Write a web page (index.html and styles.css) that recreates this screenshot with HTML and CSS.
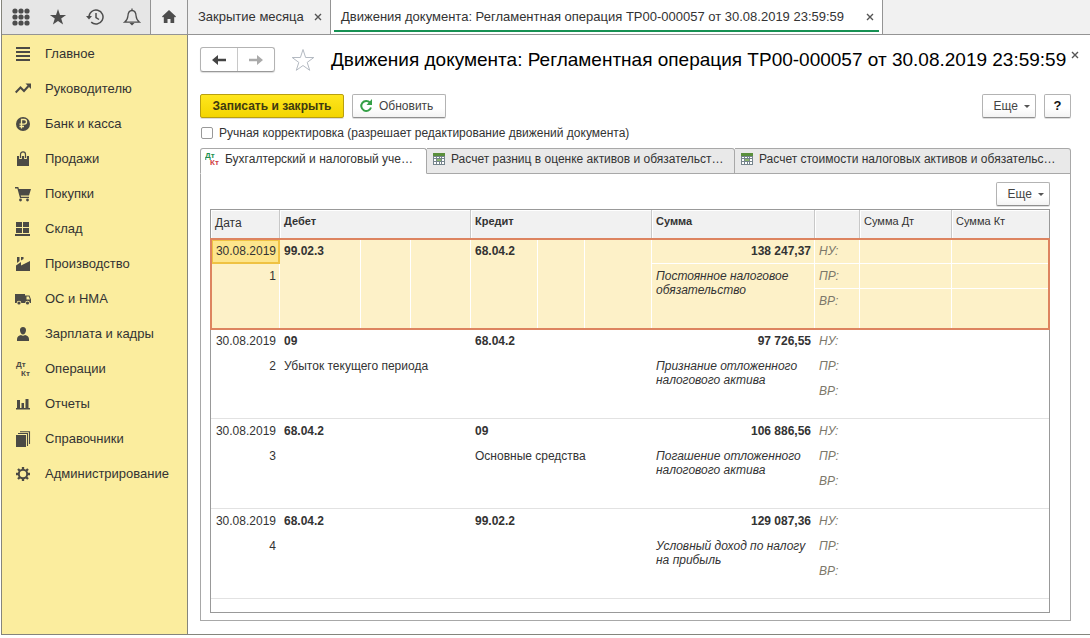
FILE: index.html
```
<!DOCTYPE html>
<html lang="ru">
<head>
    <meta charset="UTF-8">
    <meta name="viewport" content="width=device-width, initial-scale=1.0">
    <title>Движения документа</title>
    <link rel="stylesheet" href="styles.css">
</head>
<body>
    <div class="app">
        <header class="topbar">
            <div class="tools">
                <button class="tool" aria-label="Меню">
                    <svg width="18" height="18" viewBox="0 0 18 18" fill="currentColor"><circle cx="3" cy="3" r="2.6"/><circle cx="9" cy="3" r="2.6"/><circle cx="15" cy="3" r="2.6"/><circle cx="3" cy="9" r="2.6"/><circle cx="9" cy="9" r="2.6"/><circle cx="15" cy="9" r="2.6"/><circle cx="3" cy="15" r="2.6"/><circle cx="9" cy="15" r="2.6"/><circle cx="15" cy="15" r="2.6"/></svg>
                </button>
                <button class="tool" aria-label="Избранное">
                    <svg width="18" height="18" viewBox="0 0 18 18" fill="currentColor"><path d="M9 1l2 5.900h6.100l-4.900 3.700 1.900 6L9 13l-5.100 3.600 1.900-6L.9 6.900H7z"/></svg>
                </button>
                <button class="tool" aria-label="История">
                    <svg width="18" height="18" viewBox="0 0 18 18" fill="none" stroke="currentColor" stroke-width="1.5"><path d="M3 9a7 7 0 1 1 2.200 5.100M10 5v4.500l3 2"/><path d="M0 8h6L3 11.500z" fill="currentColor" stroke="none"/></svg>
                </button>
                <button class="tool" aria-label="Оповещения">
                    <svg width="18" height="18" viewBox="0 0 18 18" fill="none" stroke="currentColor" stroke-width="1.300"><path d="M9 .5v2M1.500 14.200h15c-2.400-1.700-3.200-3.300-3.400-6.200C12.900 4.500 11.500 2.500 9 2.500S5.100 4.500 4.900 8c-.2 2.900-1 4.500-3.400 6.200z"/><path d="M6.500 15h5L9 17.500z" fill="currentColor" stroke="none"/></svg>
                </button>
            </div>
            <button class="home" aria-label="Начальная страница">
                <svg width="14" height="14" viewBox="0 0 14 14" fill="currentColor"><path d="M7 0l7 6.500-1 1-.8-.7V13H8.500V9h-3v4H1.800V6.800l-.8.7-1-1z"/></svg>
            </button>
            <div class="page-tab">
                <a href="#">Закрытие месяца</a>
                <button class="close" aria-label="Закрыть"><svg width="8" height="8" viewBox="0 0 8 8"><path d="M1 1l6 6M7 1L1 7"/></svg></button>
            </div>
            <div class="page-tab active">
                <a href="#">Движения документа: Регламентная операция ТР00-000057 от 30.08.2019 23:59:59</a>
                <button class="close" aria-label="Закрыть"><svg width="8" height="8" viewBox="0 0 8 8"><path d="M1 1l6 6M7 1L1 7"/></svg></button>
            </div>
        </header>

        <div class="workspace">
            <nav class="sidebar">
                <a href="#"><svg viewBox="0 0 16 16"><path d="M1 1h14v2H1zM1 5h14v2H1zM1 9h14v2H1zM1 13h14v2H1z"/></svg>Главное</a>
                <a href="#"><svg viewBox="0 0 16 16"><path d="M.7 11.500l4.800-5L9 10l4.500-5" fill="none" stroke="currentColor" stroke-width="2"/><path d="M10.500 2.500H16V8z"/></svg>Руководителю</a>
                <a href="#"><svg viewBox="0 0 16 16"><circle cx="8" cy="8" r="7"/><path d="M6.500 12.500v-9h2.700a2.300 2.300 0 0 1 0 4.700H4.500M4.500 10.500h4.500" fill="none" stroke="#fbed9e" stroke-width="1.300"/></svg>Банк и касса</a>
                <a href="#"><svg viewBox="0 0 16 16"><path d="M2 5h12v10H2z"/><path d="M5.500 8V3.500C5.500 1 10.500 1 10.500 3.500V8" fill="none" stroke="#fbed9e" stroke-width="2.800"/><path d="M5.500 7V3.500C5.500 0 10.500 0 10.500 3.500V7" fill="none" stroke="currentColor" stroke-width="1.200"/></svg>Продажи</a>
                <a href="#"><svg viewBox="0 0 16 16"><path d="M0 1h3.300l.6 2H16l-2 6.500H5.700l.4 1.300H14V12H5L2.400 2.500H0z"/><circle cx="5.500" cy="14" r="1.400"/><circle cx="12.500" cy="14" r="1.400"/></svg>Покупки</a>
                <a href="#"><svg viewBox="0 0 16 16"><path d="M1 1h6v5H1zM8 1h6v5H8zM1 7h6v5H1zM8 7h6v5H8zM0 13h15v2H0z"/></svg>Склад</a>
                <a href="#"><svg viewBox="0 0 16 16"><path d="M1 15V9.500L6 6v3.500L15 5v10zM2 1h2.500v4L2 7zM6 1h2.500v2L6 4.500z"/></svg>Производство</a>
                <a href="#"><svg viewBox="0 0 16 16"><path d="M0 3h10v9H0zM10 4.500h4.500l1.500 4V12h-6z"/><path d="M11.500 5.500h2.300l1.200 3h-3.500z" fill="#fbed9e"/><circle cx="4" cy="12" r="2.300" fill="#fbed9e"/><circle cx="12.500" cy="12" r="2.300" fill="#fbed9e"/><circle cx="4" cy="12" r="1.600"/><circle cx="12.500" cy="12" r="1.600"/></svg>ОС и НМА</a>
                <a href="#"><svg viewBox="0 0 16 16"><path d="M8 1c2 0 3.200 1.400 3 3.500C10.800 6.800 9.700 8.500 8 8.500S5.200 6.800 5 4.500C4.800 2.400 6 1 8 1zM2 15v-2c0-2.500 2-3.500 4-4 1 1 3 1 4 0 2 .5 4 1.500 4 4v2z"/></svg>Зарплата и кадры</a>
                <a href="#"><svg viewBox="0 0 16 16"><text x="1" y="6">Дт</text><text x="6" y="15">Кт</text></svg>Операции</a>
                <a href="#"><svg viewBox="0 0 16 16"><path d="M2 4h3v8H2zM6.500 7h2.500v5H6.500zM10.500 3h3v9h-3zM1 12h14v1.500H1z"/></svg>Отчеты</a>
                <a href="#"><svg viewBox="0 0 16 16"><path d="M1 4h10v12H1z"/><path d="M3 2.500h9.500V15M5 .7h9.500V13" fill="none" stroke="currentColor" stroke-width="1.100"/></svg>Справочники</a>
                <a href="#"><svg viewBox="0 0 16 16"><g fill="none" stroke="currentColor"><circle cx="8" cy="8" r="4.200" stroke-width="2"/><path d="M8 1v2.500M8 12.500V15M1 8h2.500M12.500 8H15M3 3l2 2M11 11l2 2M13 3l-2 2M5 11l-2 2" stroke-width="2.300"/></g></svg>Администрирование</a>
            </nav>

            <main class="document">
                <div class="title-row">
                    <div class="history">
                        <button aria-label="Назад"><svg width="14" height="12" viewBox="0 0 14 12"><path d="M0 6l6-5v3.700h8v2.600H6V11z" fill="#444"/></svg></button>
                        <button aria-label="Вперед"><svg width="14" height="12" viewBox="0 0 14 12"><path d="M14 6L8 1v3.700H0v2.600h8V11z" fill="#aaa"/></svg></button>
                    </div>
                    <button class="favorite" aria-label="В избранное"><svg width="24" height="24" viewBox="0 0 24 24"><path d="M12 1.500l2.600 8h8.200L16.200 14.400l2.500 7.900L12 17.500l-6.700 4.800 2.500-7.900L1.200 9.500h8.200z" fill="#fff" stroke="#b4bac2"/></svg></button>
                    <h1>Движения документа: Регламентная операция ТР00-000057 от 30.08.2019 23:59:59</h1>
                    <button class="close" aria-label="Закрыть"><svg width="8" height="8" viewBox="0 0 8 8"><path d="M1 1l6 6M7 1L1 7"/></svg></button>
                </div>

                <div class="commands">
                    <button class="btn primary">Записать и закрыть</button>
                    <button class="btn refresh"><svg width="14" height="14" viewBox="0 0 14 14"><path d="M11 3.600A5 5 0 1 0 12 8.500" fill="none" stroke="#35a047" stroke-width="2"/><path d="M13 0v6H7.500z" fill="#35a047"/></svg>Обновить</button>
                    <button class="btn more push">Еще</button>
                    <button class="btn help">?</button>
                </div>

                <label class="manual"><input type="checkbox">Ручная корректировка (разрешает редактирование движений документа)</label>

                <div class="tabs">
                    <button class="tab current">
                        <svg width="16" height="16" viewBox="0 0 16 16"><text x="0" y="7" fill="#1f9050">Дт</text><text x="5" y="14" fill="#cf4040">Кт</text></svg>
                        <span>Бухгалтерский и налоговый уче…</span>
                    </button>
                    <button class="tab">
                        <svg width="12" height="12" viewBox="0 0 12 12"><path d="M0 0h12v12H0z" fill="#75848c"/><path d="M0 0h12v3H0z" fill="#5a8f3c"/><path d="M1 4h2v1H1zM4 4h2v1H4zM7 4h1v1H7zM9 4h2v1H9zM1 6h2v2H1zM9 6h2v2H9zM1 9h2v2H1zM4 9h2v2H4zM7 9h1v2H7zM9 9h2v2H9z" fill="#fff"/><path d="M4 6h4v2H4z" fill="#8bb56c"/></svg>
                        <span>Расчет разниц в оценке активов и обязательст…</span>
                    </button>
                    <button class="tab">
                        <svg width="12" height="12" viewBox="0 0 12 12"><path d="M0 0h12v12H0z" fill="#75848c"/><path d="M0 0h12v3H0z" fill="#5a8f3c"/><path d="M1 4h2v1H1zM4 4h2v1H4zM7 4h1v1H7zM9 4h2v1H9zM1 6h2v2H1zM9 6h2v2H9zM1 9h2v2H1zM4 9h2v2H4zM7 9h1v2H7zM9 9h2v2H9z" fill="#fff"/><path d="M4 6h4v2H4z" fill="#8bb56c"/></svg>
                        <span>Расчет стоимости налоговых активов и обязательс…</span>
                    </button>
                </div>

                <section class="panel">
                    <button class="btn more push">Еще</button>
                    <div class="grid">
                        <table>
                            <colgroup>
                                <col class="c-date"><col class="c-d1"><col class="c-d2"><col class="c-d3">
                                <col class="c-k1"><col class="c-k2"><col class="c-k3">
                                <col class="c-sum"><col class="c-kind"><col class="c-dt"><col class="c-kt">
                            </colgroup>
                            <thead>
                                <tr>
                                    <th class="date">Дата</th>
                                    <th class="strong" colspan="3">Дебет</th>
                                    <th class="strong" colspan="3">Кредит</th>
                                    <th class="strong">Сумма</th>
                                    <th></th>
                                    <th>Сумма Дт</th>
                                    <th>Сумма Кт</th>
                                </tr>
                            </thead>
                            <tbody class="selected">
                                <tr>
                                    <td class="date cell-focus">30.08.2019</td>
                                    <td class="strong" rowspan="3">99.02.3</td><td rowspan="3"></td><td rowspan="3"></td>
                                    <td class="strong" rowspan="3">68.04.2</td><td rowspan="3"></td><td rowspan="3"></td>
                                    <td class="amount line">138 247,37</td><td class="kind line">НУ:</td><td class="line"></td><td class="line"></td>
                                </tr>
                                <tr>
                                    <td class="number" rowspan="2">1</td>
                                    <td class="note" rowspan="2">Постоянное налоговое обязательство</td><td class="kind line">ПР:</td><td class="line"></td><td class="line"></td>
                                </tr>
                                <tr class="last"><td class="kind">ВР:</td><td></td><td></td></tr>
                            </tbody>
                            <tbody>
                                <tr>
                                    <td class="date">30.08.2019</td>
                                    <td class="strong" colspan="3">09</td>
                                    <td class="strong" colspan="3">68.04.2</td>
                                    <td class="amount">97 726,55</td><td class="kind">НУ:</td><td></td><td></td>
                                </tr>
                                <tr>
                                    <td class="number" rowspan="2">2</td>
                                    <td colspan="3" rowspan="2">Убыток текущего периода</td>
                                    <td colspan="3" rowspan="2"></td>
                                    <td class="note" rowspan="2">Признание отложенного налогового актива</td><td class="kind">ПР:</td><td></td><td></td>
                                </tr>
                                <tr class="last"><td class="kind">ВР:</td><td></td><td></td></tr>
                            </tbody>
                            <tbody>
                                <tr>
                                    <td class="date">30.08.2019</td>
                                    <td class="strong" colspan="3">68.04.2</td>
                                    <td class="strong" colspan="3">09</td>
                                    <td class="amount">106 886,56</td><td class="kind">НУ:</td><td></td><td></td>
                                </tr>
                                <tr>
                                    <td class="number" rowspan="2">3</td>
                                    <td colspan="3" rowspan="2"></td>
                                    <td colspan="3" rowspan="2">Основные средства</td>
                                    <td class="note" rowspan="2">Погашение отложенного налогового актива</td><td class="kind">ПР:</td><td></td><td></td>
                                </tr>
                                <tr class="last"><td class="kind">ВР:</td><td></td><td></td></tr>
                            </tbody>
                            <tbody>
                                <tr>
                                    <td class="date">30.08.2019</td>
                                    <td class="strong" colspan="3">68.04.2</td>
                                    <td class="strong" colspan="3">99.02.2</td>
                                    <td class="amount">129 087,36</td><td class="kind">НУ:</td><td></td><td></td>
                                </tr>
                                <tr>
                                    <td class="number" rowspan="2">4</td>
                                    <td colspan="3" rowspan="2"></td>
                                    <td colspan="3" rowspan="2"></td>
                                    <td class="note" rowspan="2">Условный доход по налогу на прибыль</td><td class="kind">ПР:</td><td></td><td></td>
                                </tr>
                                <tr class="last"><td class="kind">ВР:</td><td></td><td></td></tr>
                            </tbody>
                        </table>
                    </div>
                </section>
            </main>
        </div>
    </div>
</body>
</html>
```
FILE: styles.css
```
:root {
    --frame: #85857c;
    --line: #a8a8a8;
    --text: #333333;
    --icon: #4b4a45;
    --menu: #fbed9e;
}

* {
    box-sizing: border-box;
}

body {
    margin: 0;
    background: #ffffff;
    color: var(--text);
    font-family: "Liberation Sans", Arial, sans-serif;
    font-size: 12px;
    line-height: 14px;
}

button {
    font: inherit;
    color: inherit;
    padding: 0;
    border: none;
    background: none;
    cursor: pointer;
}

a {
    color: inherit;
    text-decoration: none;
}

svg {
    display: block;
    flex-shrink: 0;
}

svg text {
    font-size: 8px;
    font-weight: bold;
}

.app {
    display: flex;
    flex-direction: column;
    min-height: calc(100vh - 3px);
    margin-left: 1px;
    border-left: 1px solid var(--frame);
    border-bottom: 1px solid var(--frame);
}

/* Top bar */
.topbar {
    display: flex;
    height: 35px;
    background: #f1f1f1;
    border-bottom: 1px solid #949494;
    font-size: 13px;
}

.tools {
    display: flex;
    width: 149px;
    background: #e6e6e6;
    border-right: 1px solid #949494;
}

.tool,
.home {
    display: flex;
    align-items: center;
    justify-content: center;
    width: 37px;
    color: #4d4d4d;
}

.home {
    border-right: 1px solid #949494;
}

.page-tab {
    display: flex;
    align-items: center;
    justify-content: space-between;
    gap: 8px;
    min-width: 143px;
    padding: 0 8px 1px 10px;
    border-right: 1px solid #949494;
    white-space: nowrap;
}

.page-tab.active {
    position: relative;
    min-width: 552px;
    background: #ffffff;
}

.page-tab.active::after {
    content: "";
    position: absolute;
    left: 3px;
    right: 3px;
    bottom: 2px;
    height: 2px;
    background: #169153;
}

.close path {
    fill: none;
    stroke: #555555;
    stroke-width: 1.4;
}

/* Sidebar */
.workspace {
    display: flex;
    flex: 1;
}

.sidebar {
    width: 186px;
    flex-shrink: 0;
    padding-top: 1px;
    background: var(--menu);
    border-right: 1px solid var(--frame);
    font-size: 13px;
}

.sidebar a {
    display: flex;
    align-items: center;
    gap: 14px;
    height: 35px;
    padding-left: 13px;
}

.sidebar svg {
    width: 16px;
    height: 16px;
    fill: currentColor;
    color: var(--icon);
}

/* Document */
.document {
    display: flex;
    flex-direction: column;
    flex: 1;
    min-width: 0;
    padding: 12px 19px 13px 12px;
}

.title-row {
    display: flex;
    align-items: center;
    height: 25px;
    margin-right: -8px;
}

.history {
    display: flex;
    width: 75px;
    height: 25px;
    border: 1px solid #b3b3b3;
    border-bottom-color: #999999;
    border-radius: 3px;
    box-shadow: 0 1px 1px #dddddd;
}

.history button {
    display: flex;
    flex: 1;
    align-items: center;
    justify-content: center;
}

.history button + button {
    border-left: 1px solid #c8c8c8;
}

.favorite {
    margin: 0 16px;
}

h1 {
    flex: 1;
    margin: 0;
    font-size: 19px;
    font-weight: normal;
    line-height: 24px;
    color: #000000;
    white-space: nowrap;
}

.title-row .close {
    align-self: flex-start;
    padding-top: 4px;
}

.commands {
    display: flex;
    gap: 8px;
    margin-top: 22px;
}

.btn {
    height: 24px;
    border: 1px solid #b3b3b3;
    border-bottom-color: #8f8f8f;
    border-radius: 2px;
    background: linear-gradient(#ffffff 60%, #f3f3f3);
    box-shadow: 0 1px 0 #dddddd;
    color: #444444;
    font-size: 12px;
}

.btn.primary {
    width: 144px;
    border-color: #b89f10;
    background: linear-gradient(#ffe61e, #f3d500);
    color: #3f3a10;
    font-weight: bold;
}

.btn.refresh {
    display: flex;
    align-items: center;
    gap: 6px;
    width: 94px;
    padding-left: 6px;
}

.btn.more {
    display: flex;
    align-items: center;
    justify-content: flex-end;
    gap: 6px;
    width: 54px;
    padding-right: 5px;
}

.btn.more::after {
    content: "";
    border: 3px solid transparent;
    border-top-color: #555555;
    border-bottom: none;
}

.btn.help {
    width: 27px;
    color: #111111;
    font-size: 13px;
    font-weight: bold;
}

.push {
    margin-left: auto;
}

.manual {
    display: flex;
    align-items: center;
    gap: 6px;
    height: 14px;
    margin: 8px 0;
}

.manual input {
    appearance: none;
    width: 12px;
    height: 12px;
    margin: 0 0 0 1px;
    border: 1px solid #999999;
    border-radius: 2px;
    background: #ffffff;
}

/* Tabs */
.tabs {
    display: flex;
}

.tab {
    display: flex;
    align-items: center;
    flex: 1 1 336px;
    min-width: 0;
    height: 26px;
    gap: 6px;
    padding: 0 6px 4px;
    border: 1px solid var(--line);
    border-left: none;
    border-radius: 0 3px 0 0;
    background: #e9e9e9;
    white-space: nowrap;
}

.tab:nth-child(2) {
    flex-basis: 308px;
}

.tab.current {
    flex-basis: 227px;
    gap: 4px;
    padding-left: 4px;
    border-left: 1px solid var(--line);
    border-bottom-color: transparent;
    border-radius: 3px 3px 0 0;
    background: #ffffff;
}

.panel {
    display: flex;
    flex-direction: column;
    flex: 1;
    padding: 8px 20px 7px 9px;
    border: 1px solid var(--line);
    border-top: none;
}

.panel .btn {
    flex-shrink: 0;
    margin-bottom: 3px;
}

/* Entries table */
.grid {
    flex: 1;
    border: 1px solid #999999;
}

table {
    width: 100%;
    table-layout: fixed;
    border-collapse: separate;
    border-spacing: 0;
}

.c-date { width: 69px; }
.c-d1 { width: 81px; }
.c-d2 { width: 50px; }
.c-d3 { width: 60px; }
.c-k1 { width: 67px; }
.c-k2 { width: 47px; }
.c-k3 { width: 67px; }
.c-sum { width: 163px; }
.c-kind { width: 45px; }
.c-dt { width: 92px; }
.c-kt { width: 97px; }

th {
    height: 29px;
    padding: 4px 4px 0;
    border-right: 1px solid #c8c8c8;
    background: #f1f1f1;
    box-shadow: inset 1px 1px 0 #ffffff;
    font-size: 11px;
    font-weight: normal;
    text-align: left;
    vertical-align: top;
}

th.date {
    padding-top: 6px;
    font-size: 12px;
}

th:last-child {
    border-right: none;
}

.strong {
    font-weight: bold;
}

td {
    height: 25px;
    padding: 5px 4px 0;
    vertical-align: top;
}

.last td {
    height: 40px;
}

td.date {
    padding: 5px 4px 0;
    text-align: right;
}

td.number {
    text-align: right;
}

.amount {
    font-weight: bold;
    text-align: right;
}

.note {
    font-style: italic;
}

.kind {
    color: #7c786a;
    font-style: italic;
}

tbody .last td,
tbody td[rowspan] {
    border-bottom: 1px solid #e2e2e2;
}

.selected {
    outline: 2px solid #dd8460;
    outline-offset: -1px;
}

.selected td {
    background: #fdf1c8;
    border-right: 1px solid #ffffff;
}

.selected td.amount,
.selected td.number {
    padding-right: 3px;
}

.selected .line {
    border-bottom: 1px solid #ffffff;
}

.selected td.cell-focus {
    padding: 3px 2px 0;
    border: 2px solid #efc243;
    background: #fde58c;
}
```
